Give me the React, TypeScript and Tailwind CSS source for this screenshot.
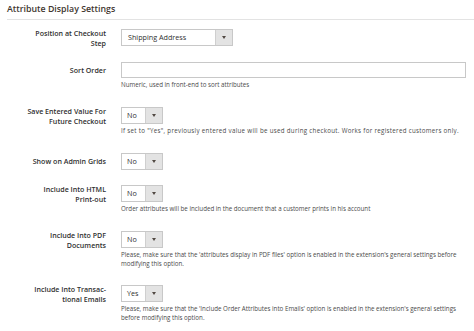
import React from "react";

const Arrow = () => (
  <div className="w-[17px] h-full bg-[#e3e3e3] border-l border-[#cfcfcf] flex items-center justify-center">
    <svg width="4" height="3" viewBox="0 0 4 3">
      <path d="M0 0 L4 0 L2 3 Z" fill="#514943" />
    </svg>
  </div>
);

const Select = ({ value, wide }: { value: string; wide?: boolean }) => (
  <div
    className={
      (wide ? "w-[112px]" : "w-[42px]") +
      " h-[17px] border border-[#c8c8c8] bg-white flex items-stretch"
    }
  >
    <div className={(wide ? "pl-[6px]" : "pl-[5px]") + " flex-1 flex items-center text-[7.2px] text-[#303030] leading-none"}>
      {value}
    </div>
    <Arrow />
  </div>
);

const Help = ({ lines, wide }: { lines: string[]; wide?: boolean }) => (
  <div className={"mt-[2px] text-[6.2px] leading-[9px] text-[#4a4a4a] " + (wide ? "tracking-[0.3px]" : "")}>
    {lines.map((l, i) => (
      <div key={i} className="whitespace-nowrap">
        {l}
      </div>
    ))}
  </div>
);

const Row = ({
  label,
  mt,
  single,
  children,
}: {
  label: string[];
  mt: string;
  single?: boolean;
  children: React.ReactNode;
}) => (
  <div className={"flex items-start " + mt}>
    <div
      className={
        "w-[106px] shrink-0 text-right text-[7.1px] font-semibold leading-[9.5px] text-[#303030] " +
        (single ? "pt-[3.75px]" : "")
      }
    >
      {label.map((l, i) => (
        <div key={i} className="whitespace-nowrap">
          {l}
        </div>
      ))}
    </div>
    <div className="ml-[15px] mr-[8px] flex-1 flex flex-col">{children}</div>
  </div>
);

export default function App() {
  return (
    <div className="w-[474px] h-[331px] bg-white overflow-hidden font-['Open_Sans',sans-serif]">
      <div className="pt-[3px] pl-[7px] text-[8.8px] leading-[12px] font-semibold text-[#41362f]">
        Attribute Display Settings
      </div>
      <div className="mt-[4px] ml-[7px] h-px bg-[#e3e3e3]" />

      <Row label={["Position at Checkout", "Step"]} mt="mt-[9px]">
        <Select value="Shipping Address" wide />
      </Row>

      <Row label={["Sort Order"]} single mt="mt-[14px]">
        <div className="h-[16px] border border-[#c8c8c8] bg-white" />
        <Help lines={["Numeric, used in front-end to sort attributes"]} />
      </Row>

      <Row label={["Save Entered Value For", "Future Checkout"]} mt="mt-[18px]">
        <Select value="No" />
        <Help
          wide
          lines={[
            'If set to "Yes", previously entered value will be used during checkout. Works for registered customers only.',
          ]}
        />
      </Row>

      <Row label={["Show on Admin Grids"]} single mt="mt-[18px]">
        <Select value="No" />
      </Row>

      <Row label={["Include Into HTML", "Print-out"]} mt="mt-[15px]">
        <Select value="No" />
        <Help
          lines={[
            "Order attributes will be included in the document that a customer prints in his account",
          ]}
        />
      </Row>

      <Row label={["Include Into PDF", "Documents"]} mt="mt-[18px]">
        <Select value="No" />
        <Help
          lines={[
            "Please, make sure that the 'attributes display in PDF files' option is enabled in the extension's general settings before",
            "modifying this option.",
          ]}
        />
      </Row>

      <Row label={["Include Into Transac-", "tional Emails"]} mt="mt-[17px]">
        <Select value="Yes" />
        <Help
          lines={[
            "Please, make sure that the 'Include Order Attributes into Emails' option is enabled in the extension's general settings",
            "before modifying this option.",
          ]}
        />
      </Row>
    </div>
  );
}
